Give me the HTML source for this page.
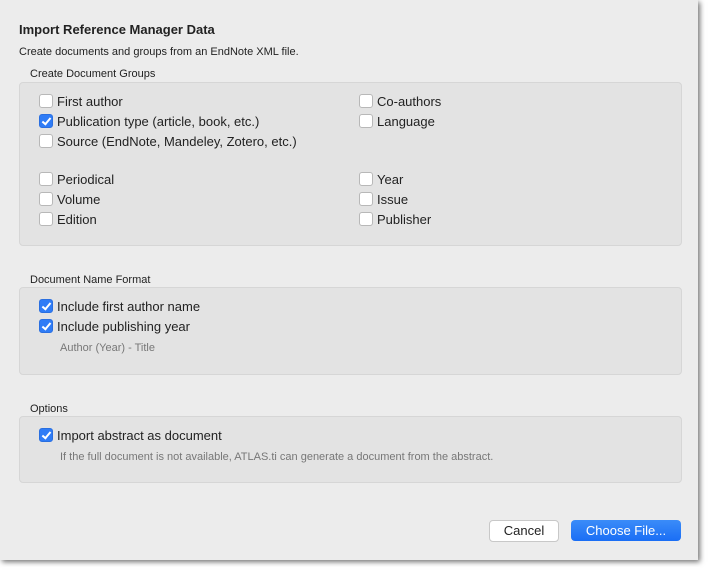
<!DOCTYPE html><html><head><style>
body{margin:0;width:711px;height:575px;background:#fff;font-family:"Liberation Sans",sans-serif;font-size:13px;color:#222;position:relative;overflow:hidden}
.win{position:absolute;left:0;top:0;width:698px;height:560px;background:#ececec;box-shadow:2px 2px 5px rgba(0,0,0,.55)}
.a{position:absolute;white-space:nowrap}
.p{position:absolute;left:19px;width:661px;background:#e3e3e3;border:1px solid #d6d6d6;border-radius:4px}
.cb{position:absolute;width:12px;height:12px;border:1px solid #b8b8b8;background:#fff;border-radius:3px}
.cb.on{background:#2f7cf6;border-color:#2a6fe0}
.cb.on::after{content:"";position:absolute;left:4px;top:1px;width:3px;height:7px;border:solid #fff;border-width:0 2px 2px 0;transform:rotate(40deg)}
.s{font-size:11px}
.h{font-size:11px;color:#777}
</style></head><body><div class="win">
<div class="a" style="left:19px;top:22px;font-weight:bold">Import Reference Manager Data</div>
<div class="a s" style="left:19px;top:46px">Create documents and groups from an EndNote XML file.</div>
<div class="a s" style="left:30px;top:68px">Create Document Groups</div>
<div class="p" style="top:82px;height:162px"></div>
<div class="cb" style="left:39px;top:94px"></div><div class="a" style="left:57px;top:94px">First author</div>
<div class="cb on" style="left:39px;top:114px"></div><div class="a" style="left:57px;top:114px">Publication type (article, book, etc.)</div>
<div class="cb" style="left:39px;top:134px"></div><div class="a" style="left:57px;top:134px">Source (EndNote, Mandeley, Zotero, etc.)</div>
<div class="cb" style="left:39px;top:172px"></div><div class="a" style="left:57px;top:172px">Periodical</div>
<div class="cb" style="left:39px;top:192px"></div><div class="a" style="left:57px;top:192px">Volume</div>
<div class="cb" style="left:39px;top:212px"></div><div class="a" style="left:57px;top:212px">Edition</div>
<div class="cb" style="left:359px;top:94px"></div><div class="a" style="left:377px;top:94px">Co-authors</div>
<div class="cb" style="left:359px;top:114px"></div><div class="a" style="left:377px;top:114px">Language</div>
<div class="cb" style="left:359px;top:172px"></div><div class="a" style="left:377px;top:172px">Year</div>
<div class="cb" style="left:359px;top:192px"></div><div class="a" style="left:377px;top:192px">Issue</div>
<div class="cb" style="left:359px;top:212px"></div><div class="a" style="left:377px;top:212px">Publisher</div>
<div class="a s" style="left:30px;top:274px">Document Name Format</div>
<div class="p" style="top:287px;height:86px"></div>
<div class="cb on" style="left:39px;top:299px"></div><div class="a" style="left:57px;top:299px">Include first author name</div>
<div class="cb on" style="left:39px;top:319px"></div><div class="a" style="left:57px;top:319px">Include publishing year</div>
<div class="a h" style="left:60px;top:342px">Author (Year) - Title</div>
<div class="a s" style="left:30px;top:403px">Options</div>
<div class="p" style="top:416px;height:65px"></div>
<div class="cb on" style="left:39px;top:428px"></div><div class="a" style="left:57px;top:428px">Import abstract as document</div>
<div class="a h" style="left:60px;top:451px">If the full document is not available, ATLAS.ti can generate a document from the abstract.</div>
<div class="a" style="left:489px;top:520px;width:68px;height:20px;background:#fff;border:1px solid #c8c8c8;border-radius:4px;text-align:center;line-height:20px">Cancel</div>
<div class="a" style="left:571px;top:520px;width:110px;height:21px;background:linear-gradient(#3b8cf8,#1a6ef5);border-radius:4px;color:#fff;text-align:center;line-height:21px">Choose File...</div>
</div></body></html>
